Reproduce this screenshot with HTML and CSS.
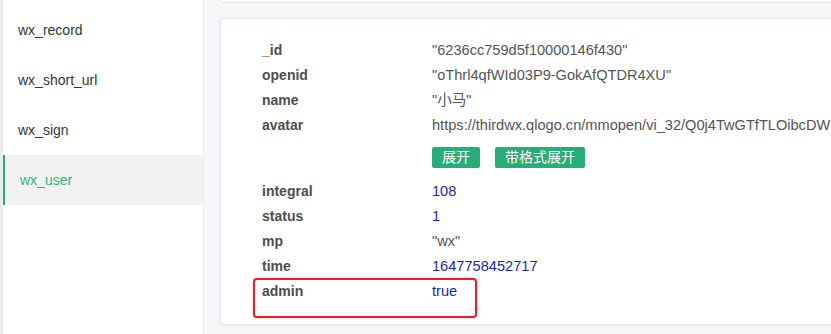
FILE: index.html
```html
<!DOCTYPE html>
<html>
<head>
<meta charset="utf-8">
<link rel="stylesheet" href="styles.css">
</head>
<body>
<div class="strip"></div>
<nav class="sidebar">
  <div class="item">wx_record</div>
  <div class="item">wx_short_url</div>
  <div class="item">wx_sign</div>
  <div class="item active">wx_user</div>
</nav>
<main class="main">
  <div class="stub"></div>
  <section class="card">
    <div class="grid">
      <div class="k">_id</div><div class="v str">"6236cc759d5f10000146f430"</div>
      <div class="k">openid</div><div class="v str">"oThrl4qfWId03P9-GokAfQTDR4XU"</div>
      <div class="k">name</div><div class="v str">"小马"</div>
      <div class="k">avatar</div><div class="v str">https://thirdwx.qlogo.cn/mmopen/vi_32/Q0j4TwGTfTLOibcDW</div>
      <div class="k"></div><div class="btns"><button class="btn">展开</button><button class="btn">带格式展开</button></div>
      <div class="k">integral</div><div class="v num">108</div>
      <div class="k">status</div><div class="v num">1</div>
      <div class="k">mp</div><div class="v str">"wx"</div>
      <div class="k">time</div><div class="v num">1647758452717</div>
      <div class="k">admin</div><div class="v num">true</div>
    </div>
    <div class="highlight"></div>
  </section>
</main>
</body>
</html>
```
FILE: styles.css
```css
html, body {
  margin: 0;
  padding: 0;
}
body {
  display: flex;
  width: 831px;
  height: 334px;
  overflow: hidden;
  font-family: "Liberation Sans", Arial, "Noto Sans CJK SC", sans-serif;
  font-size: 14px;
  background: #f6f7f9;
}
.strip {
  width: 3px;
  flex-shrink: 0;
  background: #ebebeb;
}
.sidebar {
  width: 201px;
  flex-shrink: 0;
  box-sizing: border-box;
  background: #fff;
  border-right: 1px solid #ececec;
  padding-top: 5px;
}
.item {
  height: 50px;
  line-height: 50px;
  padding-left: 15px;
  color: #333;
}
.item.active {
  background: #f2f2f2;
  border-left: 2px solid #27ae76;
  color: #2db87d;
}
.main {
  flex: 1;
  min-width: 0;
  padding-left: 16px;
  overflow: hidden;
}
.stub {
  width: 640px;
  height: 2px;
  background: #fff;
  border: 1px solid #e3e7ed;
  border-top: none;
  border-radius: 0 0 4px 4px;
}
.card {
  position: relative;
  margin-top: 15px;
  width: 660px;
  height: 307px;
  box-sizing: border-box;
  background: #fff;
  border: 1px solid #e4e8ee;
  border-radius: 4px;
  box-shadow: 0 1px 4px rgba(0, 0, 0, 0.06);
  padding: 19px 0 0 41px;
}
.grid {
  display: grid;
  grid-template-columns: 170px auto;
}
.k {
  height: 25px;
  line-height: 25px;
  font-weight: bold;
  color: #4d4d4d;
}
.v {
  height: 25px;
  line-height: 25px;
  font-size: 14.6px;
  white-space: nowrap;
}
.str {
  color: #555;
}
.num {
  color: #1d27a3;
}
.btns {
  display: flex;
  gap: 15px;
  padding: 9px 0 11px;
}
.btn {
  height: 21px;
  padding: 0 10px;
  border: none;
  border-radius: 2px;
  background: #27ad77;
  color: #fff;
  font-family: "Liberation Sans", Arial, "Noto Sans CJK SC", sans-serif;
  font-size: 14px;
  line-height: 21px;
}
.highlight {
  position: absolute;
  left: 32px;
  top: 259px;
  width: 224px;
  height: 40px;
  box-sizing: border-box;
  border: 2px solid #e8202b;
  border-radius: 4px;
  box-shadow: 0 0 2px rgba(232, 32, 43, 0.4);
}
```
